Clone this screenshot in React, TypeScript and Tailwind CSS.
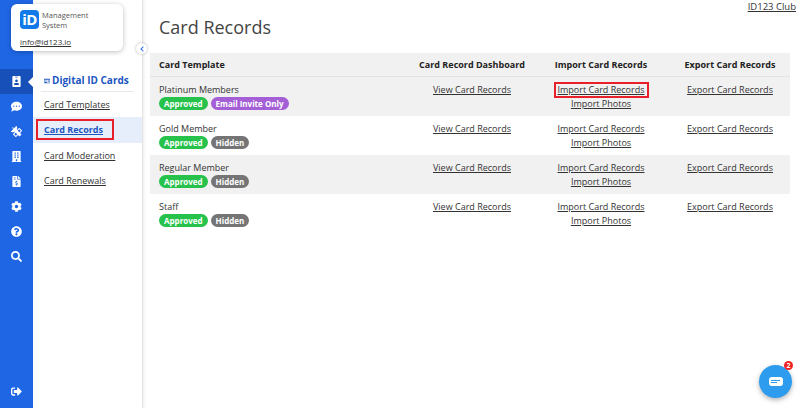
import { FaBuilding, FaCog, FaCommentDots, FaFileInvoiceDollar, FaIdBadge, FaQuestionCircle, FaSatellite, FaSearch, FaSignOutAlt, FaChevronLeft, FaRegIdCard } from "react-icons/fa";

const navIcons = [
  { Icon: FaIdBadge, active: true },
  { Icon: FaCommentDots },
  { Icon: FaSatellite, turn: "rotate-90" },
  { Icon: FaBuilding },
  { Icon: FaFileInvoiceDollar },
  { Icon: FaCog },
  { Icon: FaQuestionCircle },
  { Icon: FaSearch },
];

const rows = [
  { name: "Platinum Members", extra: "Email Invite Only", highlight: true },
  { name: "Gold Member", extra: "Hidden" },
  { name: "Regular Member", extra: "Hidden" },
  { name: "Staff", extra: "Hidden" },
];

function Badge({ label }: { label: string }) {
  const color = label === "Approved" ? "bg-[#27c24c]" : label === "Hidden" ? "bg-[#757575]" : "bg-[#a45fd6]";
  return (
    <span className={`${color} flex h-[13px] items-center rounded-full px-[5px] text-[8px] font-bold leading-none text-white`}>
      {label}
    </span>
  );
}

export default function App() {
  return (
    <div className="relative flex h-[408px] w-[800px] overflow-hidden bg-white text-[#333] [font-family:'Open_Sans',sans-serif]">
      <aside className="flex w-[33px] shrink-0 flex-col bg-[#1f66e5] pt-[69px] text-white">
        {navIcons.map(({ Icon, active, turn }, i) => (
          <div key={i} className={`relative flex h-[25px] items-center justify-center ${active ? "bg-[#1650b8]" : ""}`}>
            <Icon size={11} className={turn} />
            {active && <span className="absolute right-0 h-0 w-0 border-y-[5px] border-r-[5px] border-y-transparent border-r-white" />}
          </div>
        ))}
        <div className="mt-auto flex h-[30px] items-center justify-center pb-[4px]">
          <FaSignOutAlt size={11} />
        </div>
      </aside>

      <nav className="w-[110px] shrink-0 border-r border-[#e4e4e4] pt-[71px] shadow-[1px_0_3px_rgba(0,0,0,0.08)]">
        <div className="mx-[8px] flex h-[21px] items-center gap-[2px] border-b border-[#e8e8e8] pb-[1px] pl-[3px] text-[10px] font-bold text-[#1c56c0]">
          <FaRegIdCard size={6} />
          <span className="whitespace-nowrap">Digital ID Cards</span>
        </div>
        <div className="flex flex-col text-[9px]">
          <a className="flex h-[25px] items-center pl-[11px] underline">Card Templates</a>
          <a className="relative flex h-[26px] items-center bg-[#e6eefb] pl-[11px] font-bold text-[#1c56c0] underline">
            Card Records
            <span className="absolute left-[3px] top-[2px] h-[21px] w-[78px] border-2 border-[#e8202a]" />
          </a>
          <a className="flex h-[25px] items-center pl-[11px] underline">Card Moderation</a>
          <a className="flex h-[25px] items-center pl-[11px] underline">Card Renewals</a>
        </div>
      </nav>

      <main className="min-w-0 flex-1 pl-[7px] pr-[10px]">
        <div className="-mr-[6px] flex h-[53px] items-start justify-between">
          <h1 className="pl-[9px] pt-[14px] text-[18px] leading-[26px] text-[#444]">Card Records</h1>
          <a className="pt-[1px] text-[9.5px] leading-[12px] underline">ID123 Club</a>
        </div>
        <div className="grid h-[24px] grid-cols-[256px_132px_126px_126px] items-center border-b border-[#e2e2e2] bg-[#f1f1f1] text-center text-[9px] font-bold text-[#222]">
          <div className="pl-[9px] text-left">Card Template</div>
          <div>Card Record Dashboard</div>
          <div>Import Card Records</div>
          <div className="pl-[6px]">Export Card Records</div>
        </div>
        {rows.map((row, i) => (
          <div
            key={row.name}
            className={`grid h-[39px] grid-cols-[256px_132px_126px_126px] pt-[6px] text-center text-[9px] leading-[14px] ${i % 2 === 0 ? "bg-[#f1f1f1]" : "bg-white"}`}
          >
            <div className="pl-[9px] text-left">
              <div>{row.name}</div>
              <div className="flex gap-[3px]">
                <Badge label="Approved" />
                <Badge label={row.extra} />
              </div>
            </div>
            <div><a className="underline">View Card Records</a></div>
            <div className="flex flex-col items-center">
              <a className="relative underline">
                Import Card Records
                {row.highlight && <span className="absolute -left-[4px] -right-[4px] -top-[1px] bottom-[-1px] border-2 border-[#e8202a]" />}
              </a>
              <a className="underline">Import Photos</a>
            </div>
            <div className="pl-[6px]"><a className="underline">Export Card Records</a></div>
          </div>
        ))}
      </main>

      {/* logo card */}
      <div className="absolute left-[11px] top-[4px] h-[47px] w-[112px] rounded-[6px] bg-white px-[9px] pt-[6px] shadow-[0_1px_5px_rgba(0,0,0,0.25)]">
        <div className="flex gap-[3px]">
          <div className="flex h-[19px] w-[19px] items-center justify-center rounded-[4px] bg-[#1379e8] text-[15px] font-bold leading-none tracking-[-0.5px] text-white">iD</div>
          <div className="text-[7.5px] leading-[10px] text-[#555]">Management<br />System</div>
        </div>
        <a className="mt-[6px] block text-[8px] leading-[11px] underline">info@id123.io</a>
      </div>

      <div className="absolute left-[136px] top-[43px] flex h-[11px] w-[11px] items-center justify-center rounded-full bg-white text-[#1f66e5] shadow-[0_0_3px_rgba(0,0,0,0.3)]">
        <FaChevronLeft size={6} />
      </div>

      {/* chat */}
      <div className="absolute left-[759px] top-[365px] flex h-[33px] w-[33px] items-center justify-center rounded-full bg-[#2d9cee] shadow-[0_2px_5px_rgba(0,0,0,0.3)]">
        <div className="flex h-[9px] w-[14px] flex-col justify-center gap-[1px] rounded-[3px] bg-white pl-[2px]">
          <span className="h-px w-[9px] bg-[#2d9cee]" />
          <span className="h-px w-[6px] bg-[#2d9cee]" />
        </div>
        <span className="absolute -right-[1px] -top-[4px] flex h-[9px] w-[9px] items-center justify-center rounded-full bg-[#e22] text-[7px] font-bold leading-none text-white">2</span>
      </div>
    </div>
  );
}
